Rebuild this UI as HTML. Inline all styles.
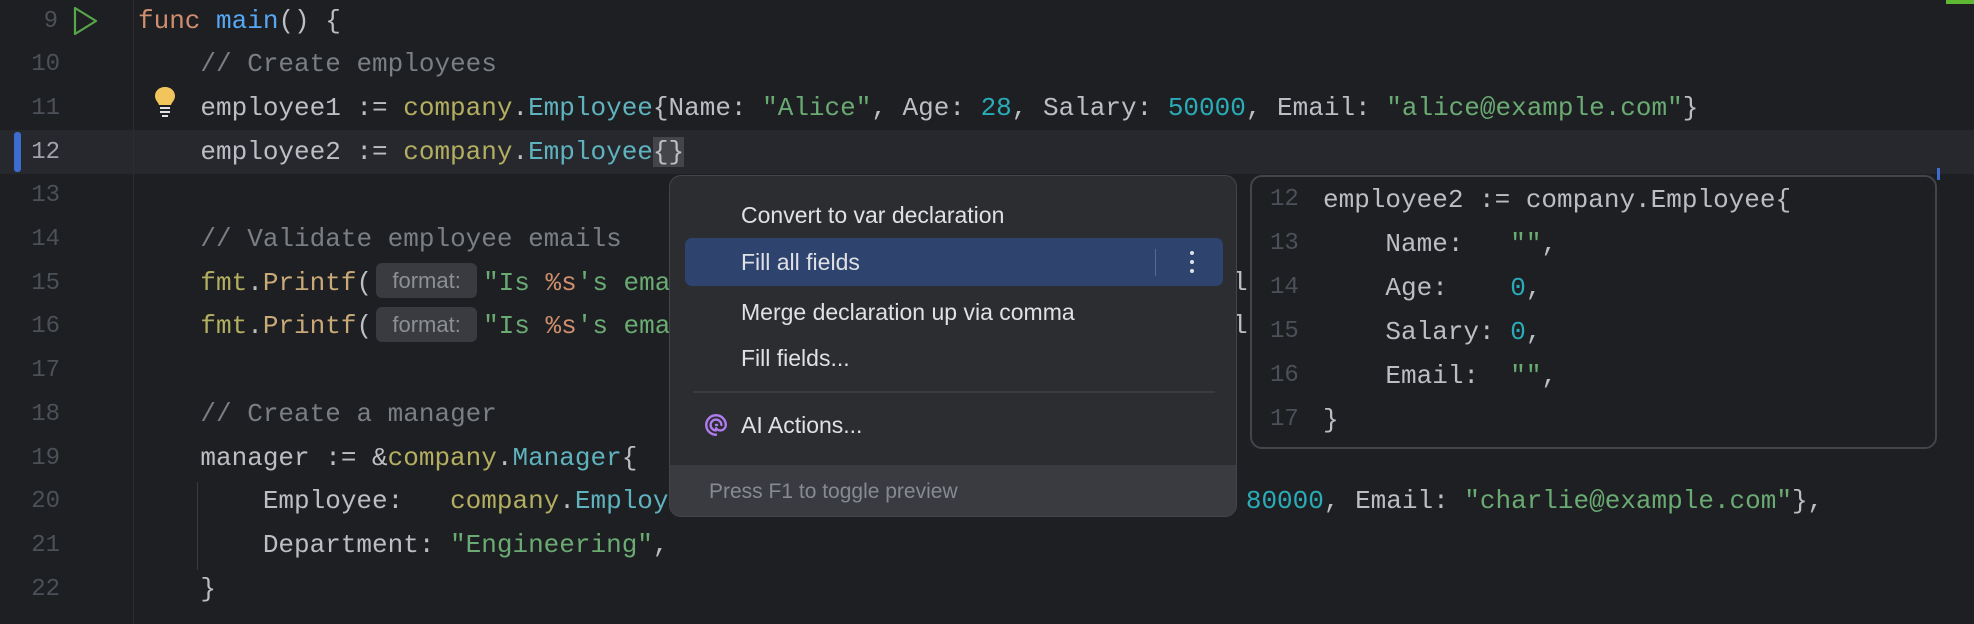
<!DOCTYPE html>
<html><head><meta charset="utf-8"><style>
*{margin:0;padding:0;box-sizing:border-box}
body{width:1974px;height:624px;background:#1e1f22;overflow:hidden;position:relative;font-family:"Liberation Mono",monospace}
.ln{position:absolute;left:0;width:60px;text-align:right;font-size:24px;color:#4b5059;height:43.7px;line-height:43.7px}
.cl{position:absolute;left:138px;white-space:pre;font-size:26px;color:#bcbec4;height:43.7px;line-height:43.7px}
.k{color:#cf8e6d}.f{color:#56a8f5}.c{color:#7a7e85}.p{color:#b3ae60}.t{color:#5fb3bf}.n{color:#2aacb8}.s{color:#6aab73}.pf{color:#c9a978}.e{color:#cf8e6d}
.hint{display:inline-block;font-family:"Liberation Sans",sans-serif;font-size:22px;color:#8c8f94;background:#393b40;border-radius:6px;width:101px;height:35px;line-height:35px;text-align:center;vertical-align:middle;margin:0 6px 0 4px;position:relative;top:-2px}
.pop{position:absolute;left:669px;top:175px;width:568px;height:342px;background:#2b2d30;border:1px solid #43454a;border-radius:12px;overflow:hidden;font-family:"Liberation Sans",sans-serif}
.it{position:absolute;left:71px;font-size:23px;color:#dfe1e5;line-height:30px;height:30px}
.prev{position:absolute;left:1250px;top:175px;width:687px;height:274px;background:#1e1f22;border:2px solid #43454a;border-radius:12px}
.pl{position:absolute;left:18px;font-size:24px;color:#4b5059;line-height:44px;height:44px}
.pc{position:absolute;left:71px;white-space:pre;font-size:26px;color:#bcbec4;line-height:44px;height:44px}
</style></head><body>
<div style="position:absolute;left:0;top:130px;width:1974px;height:43.5px;background:#26282e"></div>
<div style="position:absolute;left:133px;top:0;width:1px;height:624px;background:#2b2d30"></div>
<div style="position:absolute;left:14px;top:132px;width:7px;height:40px;background:#3d6ccf;border-radius:3px"></div>
<div style="position:absolute;left:1946px;top:0;width:28px;height:4px;background:#5fb832"></div>
<div style="position:absolute;left:1937px;top:168px;width:3px;height:12px;background:#3d6ccf"></div>
<div style="position:absolute;left:197px;top:482px;width:1px;height:88px;background:#393b40"></div>

<svg style="position:absolute;left:72px;top:6px" width="28" height="30" viewBox="0 0 28 30"><path d="M3 2 L24 15 L3 28 Z" fill="none" stroke="#57a64a" stroke-width="2.2" stroke-linejoin="round"/></svg>
<svg style="position:absolute;left:154px;top:86px" width="24" height="32" viewBox="0 0 24 32"><path d="M11 1C5 1 1 5 1 10c0 4 3 6 4 9h12c1-3 4-5 4-9 0-5-4-9-10-9z" fill="#f2c55c"/><rect x="6" y="21" width="10" height="2" fill="#dfe1e5"/><rect x="6" y="25" width="10" height="2" fill="#dfe1e5"/><rect x="8" y="29" width="6" height="2" fill="#dfe1e5"/></svg>

<div class="ln" style="top:-0.5px;width:58px">9</div>
<div class="ln" style="top:43.2px">10</div>
<div class="ln" style="top:86.9px">11</div>
<div class="ln" style="top:130.6px;color:#a1a3ab">12</div>
<div class="ln" style="top:174.3px">13</div>
<div class="ln" style="top:218px">14</div>
<div class="ln" style="top:261.7px">15</div>
<div class="ln" style="top:305.4px">16</div>
<div class="ln" style="top:349.1px">17</div>
<div class="ln" style="top:392.8px">18</div>
<div class="ln" style="top:436.5px">19</div>
<div class="ln" style="top:480.2px">20</div>
<div class="ln" style="top:523.9px">21</div>
<div class="ln" style="top:567.6px">22</div>

<div class="cl" style="top:-0.5px"><span class="k">func</span> <span class="f">main</span>() {</div>
<div class="cl" style="top:43.2px">    <span class="c">// Create employees</span></div>
<div class="cl" style="top:86.9px">    employee1 := <span class="p">company</span>.<span class="t">Employee</span>{Name: <span class="s">"Alice"</span>, Age: <span class="n">28</span>, Salary: <span class="n">50000</span>, Email: <span class="s">"alice@example.com"</span>}</div>
<div class="cl" style="top:130.6px">    employee2 := <span class="p">company</span>.<span class="t">Employee</span><span style="background:#43454a">{}</span></div>
<div class="cl" style="top:218px">    <span class="c">// Validate employee emails</span></div>
<div class="cl" style="top:261.7px">    <span class="p">fmt</span>.<span class="pf">Printf</span>(<span class="hint">format:</span><span class="s">"Is <span class="e">%s</span>'s email valid? %t\n"</span>, employee1.Name, util</div>
<div class="cl" style="top:305.4px">    <span class="p">fmt</span>.<span class="pf">Printf</span>(<span class="hint">format:</span><span class="s">"Is <span class="e">%s</span>'s email valid? %t\n"</span>, employee2.Name, util</div>
<div class="cl" style="top:392.8px">    <span class="c">// Create a manager</span></div>
<div class="cl" style="top:436.5px">    manager := &amp;<span class="p">company</span>.<span class="t">Manager</span>{</div>
<div class="cl" style="top:480.2px">        Employee:   <span class="p">company</span>.<span class="t">Employee</span>{Name: <span class="s">"Charlie"</span>, Age: <span class="n">45</span>, Salary: <span class="n">80000</span>, Email: <span class="s">"charlie@example.com"</span>},</div>
<div class="cl" style="top:523.9px">        Department: <span class="s">"Engineering"</span>,</div>
<div class="cl" style="top:567.6px">    }</div>

<div class="pop">
  <div style="position:absolute;left:15px;top:62px;width:538px;height:48px;background:#2e436e;border-radius:7px"></div>
  <div style="position:absolute;left:485px;top:73px;width:1px;height:27px;background:#5a6a8e"></div>
  <div style="position:absolute;left:520px;top:75px;width:4px;height:4px;border-radius:2px;background:#dfe1e5"></div>
  <div style="position:absolute;left:520px;top:84px;width:4px;height:4px;border-radius:2px;background:#dfe1e5"></div>
  <div style="position:absolute;left:520px;top:93px;width:4px;height:4px;border-radius:2px;background:#dfe1e5"></div>
  <div class="it" style="top:24px">Convert to var declaration</div>
  <div class="it" style="top:71px">Fill all fields</div>
  <div class="it" style="top:121px">Merge declaration up via comma</div>
  <div class="it" style="top:167px">Fill fields...</div>
  <div style="position:absolute;left:23px;top:215px;width:522px;height:2px;background:#393b40"></div>
  <svg style="position:absolute;left:33px;top:236px" width="26" height="26" viewBox="0 0 24 24"><path d="M12 21a9 9 0 1 1 9-9M12 17a5 5 0 1 1 5-5M12 12h1" fill="none" stroke="#b07cf0" stroke-width="2.2" stroke-linecap="round"/><path d="M21 12a5 5 0 0 1-9 3" fill="none" stroke="#b07cf0" stroke-width="2.2" stroke-linecap="round"/></svg>
  <div class="it" style="top:234px">AI Actions...</div>
  <div style="position:absolute;left:0;top:289px;width:568px;height:53px;background:#393b40"></div>
  <div style="position:absolute;left:39px;top:302px;font-size:21px;color:#868a91;line-height:28px">Press F1 to toggle preview</div>
</div>

<div class="prev">
  <div class="pl" style="top:1px">12</div><div class="pc" style="top:1px">employee2 := company.Employee{</div>
  <div class="pl" style="top:45px">13</div><div class="pc" style="top:45px">    Name:   <span class="s">""</span>,</div>
  <div class="pl" style="top:89px">14</div><div class="pc" style="top:89px">    Age:    <span class="n">0</span>,</div>
  <div class="pl" style="top:133px">15</div><div class="pc" style="top:133px">    Salary: <span class="n">0</span>,</div>
  <div class="pl" style="top:177px">16</div><div class="pc" style="top:177px">    Email:  <span class="s">""</span>,</div>
  <div class="pl" style="top:221px">17</div><div class="pc" style="top:221px">}</div>
</div>
</body></html>
